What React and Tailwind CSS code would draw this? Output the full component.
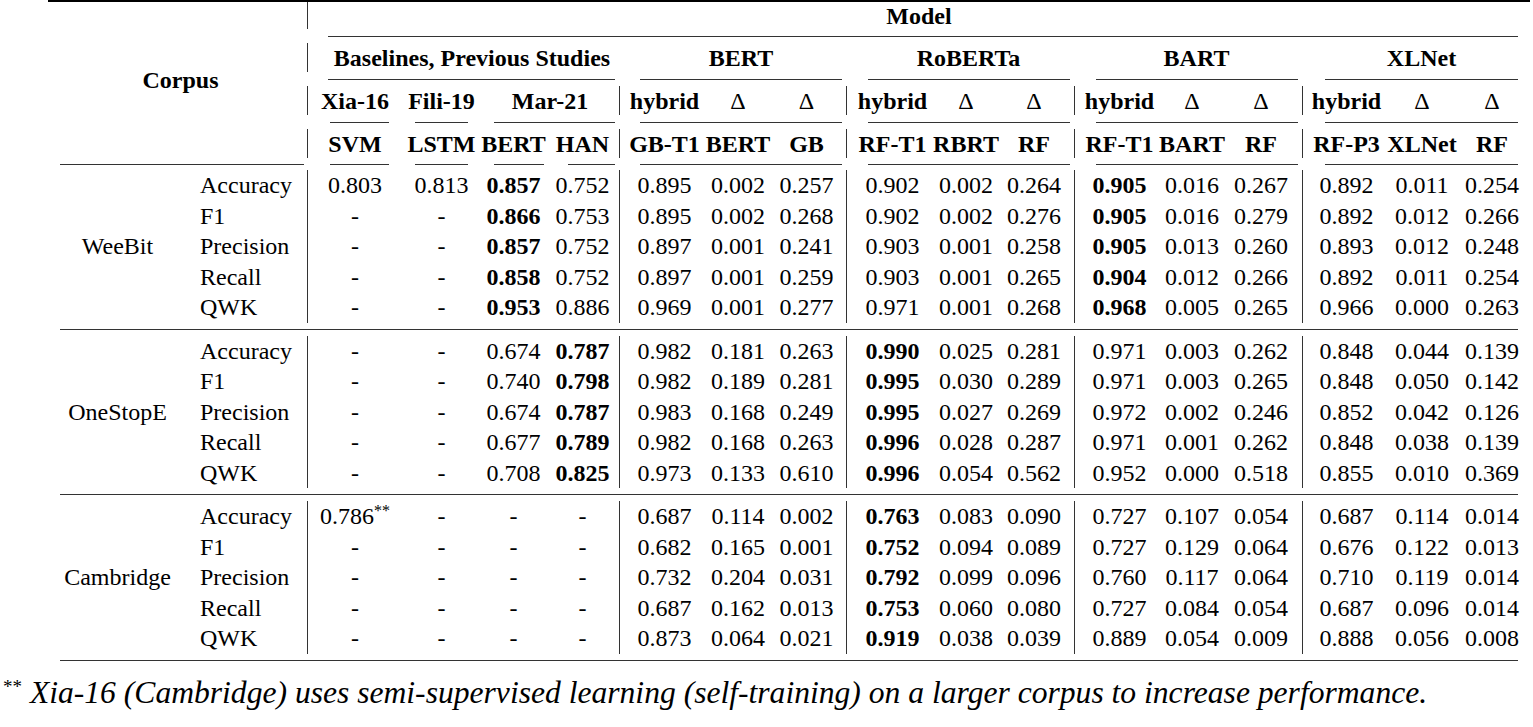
import React from "react";

// 18 columns, widths taken from the reference (table spans x 48 -> 1530)
const GRID =
  "grid grid-cols-[139px_120px_95px_79px_65px_73px_90px_58px_79px_92px_56px_80px_90px_56px_82px_88px_64px_76px]";

const LINE = "border-l border-[#333]";
const RULE = "self-center h-px bg-[#333]";

// value columns (0-based) that begin a block and carry the vertical rule
const SPLIT = [0, 4, 7, 10, 13];

const corpora = [
  {
    name: "WeeBit",
    rows: [
      ["Accuracy", "0.803", "0.813", "*0.857", "0.752", "0.895", "0.002", "0.257", "0.902", "0.002", "0.264", "*0.905", "0.016", "0.267", "0.892", "0.011", "0.254"],
      ["F1", "-", "-", "*0.866", "0.753", "0.895", "0.002", "0.268", "0.902", "0.002", "0.276", "*0.905", "0.016", "0.279", "0.892", "0.012", "0.266"],
      ["Precision", "-", "-", "*0.857", "0.752", "0.897", "0.001", "0.241", "0.903", "0.001", "0.258", "*0.905", "0.013", "0.260", "0.893", "0.012", "0.248"],
      ["Recall", "-", "-", "*0.858", "0.752", "0.897", "0.001", "0.259", "0.903", "0.001", "0.265", "*0.904", "0.012", "0.266", "0.892", "0.011", "0.254"],
      ["QWK", "-", "-", "*0.953", "0.886", "0.969", "0.001", "0.277", "0.971", "0.001", "0.268", "*0.968", "0.005", "0.265", "0.966", "0.000", "0.263"],
    ],
  },
  {
    name: "OneStopE",
    rows: [
      ["Accuracy", "-", "-", "0.674", "*0.787", "0.982", "0.181", "0.263", "*0.990", "0.025", "0.281", "0.971", "0.003", "0.262", "0.848", "0.044", "0.139"],
      ["F1", "-", "-", "0.740", "*0.798", "0.982", "0.189", "0.281", "*0.995", "0.030", "0.289", "0.971", "0.003", "0.265", "0.848", "0.050", "0.142"],
      ["Precision", "-", "-", "0.674", "*0.787", "0.983", "0.168", "0.249", "*0.995", "0.027", "0.269", "0.972", "0.002", "0.246", "0.852", "0.042", "0.126"],
      ["Recall", "-", "-", "0.677", "*0.789", "0.982", "0.168", "0.263", "*0.996", "0.028", "0.287", "0.971", "0.001", "0.262", "0.848", "0.038", "0.139"],
      ["QWK", "-", "-", "0.708", "*0.825", "0.973", "0.133", "0.610", "*0.996", "0.054", "0.562", "0.952", "0.000", "0.518", "0.855", "0.010", "0.369"],
    ],
  },
  {
    name: "Cambridge",
    rows: [
      ["Accuracy", "0.786**", "-", "-", "-", "0.687", "0.114", "0.002", "*0.763", "0.083", "0.090", "0.727", "0.107", "0.054", "0.687", "0.114", "0.014"],
      ["F1", "-", "-", "-", "-", "0.682", "0.165", "0.001", "*0.752", "0.094", "0.089", "0.727", "0.129", "0.064", "0.676", "0.122", "0.013"],
      ["Precision", "-", "-", "-", "-", "0.732", "0.204", "0.031", "*0.792", "0.099", "0.096", "0.760", "0.117", "0.064", "0.710", "0.119", "0.014"],
      ["Recall", "-", "-", "-", "-", "0.687", "0.162", "0.013", "*0.753", "0.060", "0.080", "0.727", "0.084", "0.054", "0.687", "0.096", "0.014"],
      ["QWK", "-", "-", "-", "-", "0.873", "0.064", "0.021", "*0.919", "0.038", "0.039", "0.889", "0.054", "0.009", "0.888", "0.056", "0.008"],
    ],
  },
];

const groups = ["BERT", "RoBERTa", "BART", "XLNet"];
const subHeads = [
  ["GB-T1", "BERT", "GB"],
  ["RF-T1", "RBRT", "RF"],
  ["RF-T1", "BART", "RF"],
  ["RF-P3", "XLNet", "RF"],
];

function Value({ v, idx }) {
  const bold = v.startsWith("*") && !v.endsWith("**");
  const text = bold ? v.slice(1) : v;
  const line = SPLIT.includes(idx) ? LINE : "";
  return (
    <div className={`flex items-center justify-center whitespace-nowrap ${line} ${bold ? "font-bold" : ""}`}>
      {text.endsWith("**") ? (
        <span>
          {text.slice(0, -2)}
          <sup className="text-[16px]">**</sup>
        </span>
      ) : (
        text
      )}
    </div>
  );
}

function Corpus({ name, rows }) {
  return (
    <div className={`${GRID} grid-rows-[repeat(5,30.5px)]`}>
      <div className="col-start-1 row-start-1 row-end-6 flex items-center justify-center">{name}</div>
      {rows.map((r) => (
        <React.Fragment key={r[0]}>
          <div className="flex items-center pl-[13px]">{r[0]}</div>
          {r.slice(1).map((v, i) => (
            <Value key={i} v={v} idx={i} />
          ))}
        </React.Fragment>
      ))}
    </div>
  );
}

function MidRule() {
  return (
    <div className="h-[13px] flex items-center">
      <div className="h-px w-full bg-[#333] mx-[12px]" />
    </div>
  );
}

// cmidrule segments for the four model blocks
function BlockRules({ row }) {
  const r =
    row === 4 ? "row-start-4" : row === 6 ? "row-start-6" : "row-start-8";
  return (
    <>
      <div className={`${RULE} ${r} col-start-7 col-end-10 ml-[21px] mr-[4px]`} />
      <div className={`${RULE} ${r} col-start-10 col-end-13 ml-[22px] mr-[4px]`} />
      <div className={`${RULE} ${r} col-start-13 col-end-16 ml-[22px] mr-[4px]`} />
      <div className={`${RULE} ${r} col-start-16 col-end-19 ml-[23px] mr-[12px]`} />
    </>
  );
}

export default function App() {
  return (
    <div className="w-[1533px] h-[727px] overflow-hidden bg-white text-black font-['Liberation_Serif',serif] text-[24px] leading-none">
      <div className="ml-[48px] w-[1482px]">
        <div className="h-[2px] bg-black" />

        {/* header */}
        <div className={`${GRID} grid-rows-[27px_14px_29px_14px_29px_14px_29px_12px] font-bold`}>
          <div className="col-start-1 col-end-3 row-start-1 row-end-8 flex items-center justify-center pl-[6px]">
            Corpus
          </div>

          <div className={`col-start-3 col-end-19 row-start-1 flex items-center justify-center ${LINE}`}>Model</div>
          <div className={`${RULE} row-start-2 col-start-3 col-end-19 ml-[21px] mr-[12px]`} />

          <div className={`col-start-3 col-end-7 row-start-3 flex items-center justify-center pl-[17px] whitespace-nowrap ${LINE}`}>
            Baselines, Previous Studies
          </div>
          <div className="col-start-7 col-end-10 row-start-3 flex items-center justify-center pl-[17px]">BERT</div>
          <div className="col-start-10 col-end-13 row-start-3 flex items-center justify-center pl-[17px]">RoBERTa</div>
          <div className="col-start-13 col-end-16 row-start-3 flex items-center justify-center pl-[17px]">BART</div>
          <div className="col-start-16 col-end-19 row-start-3 flex items-center justify-center pl-[11px]">XLNet</div>

          <div className={`${RULE} row-start-4 col-start-3 col-end-7 ml-[21px] mr-[4px]`} />
          <BlockRules row={4} />

          <div className={`col-start-3 row-start-5 flex items-center justify-center whitespace-nowrap ${LINE}`}>Xia-16</div>
          <div className="col-start-4 row-start-5 flex items-center justify-center whitespace-nowrap">Fili-19</div>
          <div className="col-start-5 col-end-7 row-start-5 flex items-center justify-center">Mar-21</div>
          {groups.map((g) => (
            <React.Fragment key={g}>
              <div className={`row-start-5 flex items-center justify-center ${LINE}`}>hybrid</div>
              <div className="row-start-5 flex items-center justify-center font-normal">Δ</div>
              <div className="row-start-5 flex items-center justify-center font-normal">Δ</div>
            </React.Fragment>
          ))}

          <div className={`${RULE} row-start-6 col-start-3 col-end-4 ml-[23px] mr-[13px]`} />
          <div className={`${RULE} row-start-6 col-start-4 col-end-5 mx-[13px]`} />
          <div className={`${RULE} row-start-6 col-start-5 col-end-7 ml-[13px] mr-[4px]`} />
          <BlockRules row={6} />

          <div className={`col-start-3 row-start-7 flex items-center justify-center ${LINE}`}>SVM</div>
          <div className="row-start-7 flex items-center justify-center">LSTM</div>
          <div className="row-start-7 flex items-center justify-center">BERT</div>
          <div className="row-start-7 flex items-center justify-center">HAN</div>
          {subHeads.map((s, si) => (
            <React.Fragment key={si}>
              <div className={`row-start-7 flex items-center justify-center whitespace-nowrap ${LINE}`}>{s[0]}</div>
              <div className="row-start-7 flex items-center justify-center whitespace-nowrap">{s[1]}</div>
              <div className="row-start-7 flex items-center justify-center">{s[2]}</div>
            </React.Fragment>
          ))}

          <div className={`${RULE} row-start-8 col-start-1 col-end-3 ml-[12px] mr-[3px]`} />
          <div className={`${RULE} row-start-8 col-start-3 col-end-4 ml-[23px] mr-[13px]`} />
          <div className={`${RULE} row-start-8 col-start-4 col-end-5 mx-[13px]`} />
          <div className={`${RULE} row-start-8 col-start-5 col-end-6 ml-[13px] mr-[2px]`} />
          <div className={`${RULE} row-start-8 col-start-6 col-end-7 ml-[22px] mr-[4px]`} />
          <BlockRules row={8} />
        </div>

        {/* body */}
        {corpora.map((c, i) => (
          <React.Fragment key={c.name}>
            {i > 0 && <MidRule />}
            <Corpus name={c.name} rows={c.rows} />
          </React.Fragment>
        ))}
        <MidRule />
      </div>

      <p className="mt-[10px] pl-[3px] text-[31.6px] leading-[31px] whitespace-nowrap">
        <sup className="text-[19px]">**</sup>{" "}
        <span className="italic">
          Xia-16 (Cambridge) uses semi-supervised learning (self-training) on a larger corpus to increase performance.
        </span>
      </p>
    </div>
  );
}
